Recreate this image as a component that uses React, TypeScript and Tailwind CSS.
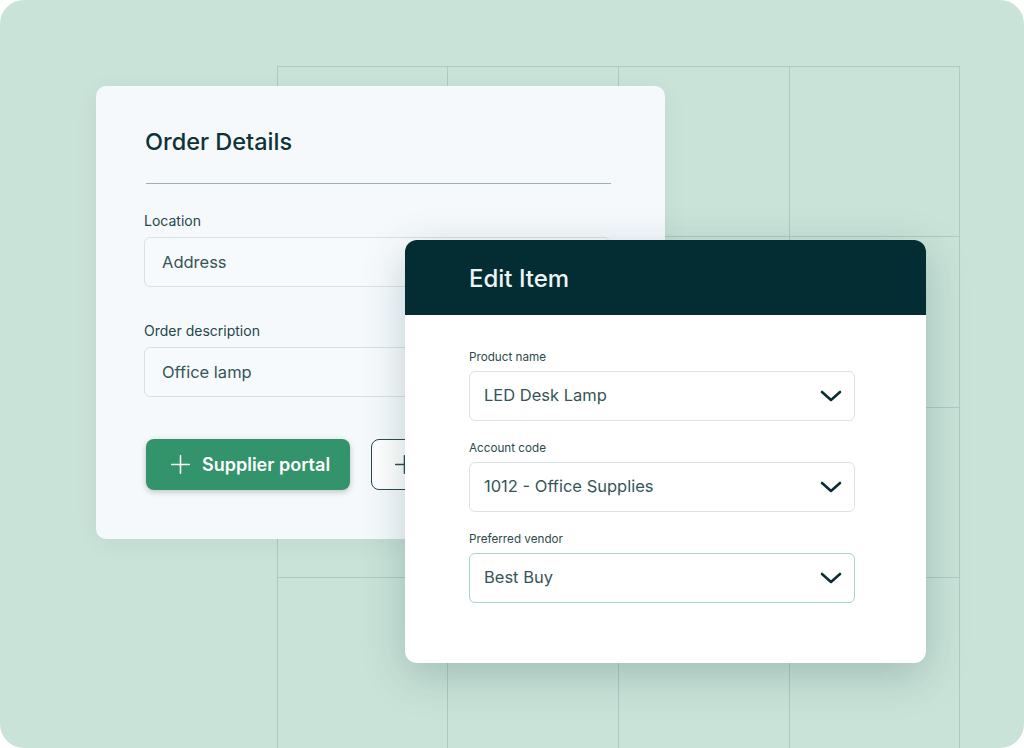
import React from "react";

const font = { fontFamily: "Inter, 'Noto Sans', sans-serif" };

function Plus({ className }: { className?: string }) {
  return (
    <svg viewBox="0 0 24 24" className={className} fill="none" stroke="currentColor" strokeWidth={1.8} strokeLinecap="round">
      <path d="M12 2v20M2 12h20" />
    </svg>
  );
}

function Chevron() {
  return (
    <svg viewBox="0 0 22 12" className="w-[22px] h-[12px] text-[#0b2e33]" fill="none" stroke="currentColor" strokeWidth={2.6} strokeLinecap="round" strokeLinejoin="round">
      <path d="M2 2l9 8 9-8" />
    </svg>
  );
}

function TextField({ label, value }: { label: string; value: string }) {
  return (
    <div className="flex flex-col">
      <span className="text-[14px] leading-[20px] text-[#24474a]">{label}</span>
      <div className="mt-[6px] h-[50px] rounded-[6px] border border-[#d9e1e4] bg-[#f7fafc] flex items-center pl-[17px] text-[16.5px] text-[#355558]">
        {value}
      </div>
    </div>
  );
}

function SelectField({ label, value, accent }: { label: string; value: string; accent?: boolean }) {
  return (
    <div className="flex flex-col">
      <span className="text-[11.7px] leading-[16px] text-[#2d4a4d]">{label}</span>
      <div
        className={`mt-[6px] h-[50px] w-[386px] rounded-[6px] border bg-white flex items-center justify-between pl-[14px] pr-[12px] text-[16.5px] text-[#355558] ${
          accent ? "border-[#a6d5c2]" : "border-[#dbe2e5]"
        }`}
      >
        <span className="pb-[2px]">{value}</span>
        <Chevron />
      </div>
    </div>
  );
}

function GridBackdrop() {
  const cols = ["w-[170px]", "w-[171px]", "w-[171px]", "w-[170px]"];
  const rows = ["h-[170px]", "h-[171px]", "h-[170px]", "h-[171px]"];
  return (
    <div className="absolute left-[277px] top-[66px] border-l border-t border-[#adcac3] flex flex-col">
      {rows.map((r, i) => (
        <div key={i} className="flex">
          {cols.map((c, j) => (
            <div key={j} className={`${c} ${r} border-r border-b border-[#adcac3]`} />
          ))}
        </div>
      ))}
    </div>
  );
}

export default function App() {
  return (
    <div className="w-[1024px] h-[748px] bg-white" style={font}>
      <div className="relative w-full h-full rounded-[24px] bg-[#cae3d9] overflow-hidden">
        <GridBackdrop />

        {/* Order details card */}
        <div className="absolute left-[96px] top-[86px] w-[569px] h-[453px] rounded-[10px] bg-[#f5f9fc] shadow-[0_4px_24px_rgba(20,60,50,0.06)] pl-[48px] pt-[41px]">
          <div className="w-[466px] flex flex-col">
            <h2 className="text-[23.5px] leading-[30px] font-medium text-[#0d3336] pl-[1px]">Order Details</h2>
            <div className="mt-[26px] ml-[2px] h-px w-[465px] bg-[#9db1b3]" />
            <div className="mt-[27px]">
              <TextField label="Location" value="Address" />
            </div>
            <div className="mt-[34px]">
              <TextField label="Order description" value="Office lamp" />
            </div>
            <div className="mt-[42px] flex gap-[21px] pl-[2px]">
              <button className="h-[51px] w-[204px] rounded-[8px] bg-[#33936b] text-white flex items-center pl-[24px] gap-[11px] text-[18px] font-semibold shadow-[0_2px_6px_rgba(0,0,0,0.22)]">
                <Plus className="w-[21px] h-[21px]" />
                Supplier portal
              </button>
              <button className="h-[51px] w-[200px] rounded-[8px] border border-[#2c4a50] bg-white text-[#2c4a50] flex items-center pl-[22px]">
                <Plus className="w-[21px] h-[21px]" />
              </button>
            </div>
          </div>
        </div>

        {/* Edit item card */}
        <div className="absolute left-[405px] top-[240px] w-[521px] h-[423px] rounded-[12px] bg-white overflow-hidden shadow-[0_12px_44px_rgba(10,60,55,0.22)] flex flex-col">
          <div className="h-[75px] bg-[#032d33] flex items-center pl-[64px]">
            <span className="text-[24px] font-medium text-[#eef4f4] pt-[3px]">Edit Item</span>
          </div>
          <div className="flex flex-col pl-[64px] pt-[34px] gap-[19px]">
            <SelectField label="Product name" value="LED Desk Lamp" />
            <SelectField label="Account code" value="1012 - Office Supplies" />
            <SelectField label="Preferred vendor" value="Best Buy" accent />
          </div>
        </div>
      </div>
    </div>
  );
}
